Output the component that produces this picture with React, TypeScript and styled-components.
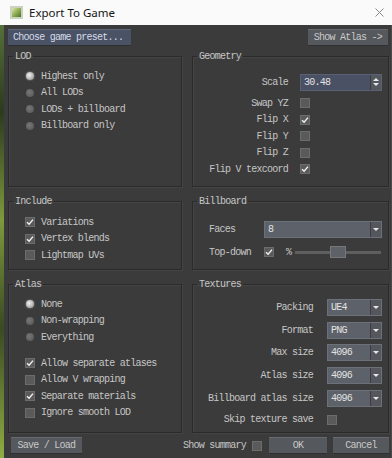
import styled, { createGlobalStyle } from "styled-components";

const Global = createGlobalStyle`
  html, body { margin: 0; padding: 0; background: #3b3b3b; }
  body { width: 392px; height: 458px; overflow: hidden; }
`;

const mono = `"Liberation Mono", "Courier New", monospace`;

const Screen = styled.div`
  width: 392px;
  height: 458px;
  display: flex;
  flex-direction: column;
  font-family: ${mono};
  font-size: 10px;
  letter-spacing: -0.75px;
  color: #c6c6c6;
`;

const TitleBar = styled.div`
  height: 25px;
  flex: none;
  display: flex;
  align-items: center;
  gap: 6px;
  padding: 0 8px 0 10px;
  background: #fafafa;
  font-family: "Noto Sans", "Open Sans", sans-serif;
  font-size: 11.5px;
  letter-spacing: 0;
  color: #151515;
`;

const TitleText = styled.span`
  flex: 1;
`;

const Frame = styled.div`
  flex: 1;
  display: flex;
  min-height: 0;
`;

const DesktopStrip = styled.div`
  width: 4px;
  flex: none;
  background: linear-gradient(180deg, #55703a 0%, #2c3a1e 20%, #7d9a3c 45%, #3a4a22 70%, #8fae44 100%);
`;

const Window = styled.div`
  flex: 1;
  display: flex;
  flex-direction: column;
  padding: 4px 3px 4px 4px;
  background: #3b3b3b;
  box-shadow: inset -1px 0 0 #4a4a4a;
`;

const TopBar = styled.div`
  height: 17px;
  display: flex;
  justify-content: space-between;
  padding-right: 1px;
`;

const Button = styled.div<{ $w: number; $tone?: "blue" | "grey" }>`
  width: ${(p) => p.$w}px;
  height: 17px;
  box-sizing: border-box;
  display: flex;
  align-items: center;
  justify-content: ${(p) => (p.$tone === "blue" ? "flex-start" : "center")};
  padding-left: ${(p) => (p.$tone === "blue" ? "5px" : "0")};
  background: ${(p) => (p.$tone === "blue" ? "#4a5266" : "#55585c")};
  border-top: 1px solid ${(p) => (p.$tone === "blue" ? "#5e667a" : "#66696d")};
  border-bottom: 1px solid #2e2f31;
  color: ${(p) => (p.$tone === "blue" ? "#d6dbe8" : "#c9c9c9")};
`;

const Grid = styled.div`
  margin-top: 5px;
  display: grid;
  grid-template-columns: 174px 197px;
  grid-template-rows: 136px 74px 154px;
  column-gap: 10px;
  row-gap: 9px;
`;

const Group = styled.fieldset`
  margin: 0;
  padding: 0;
  min-width: 0;
  border: 1px solid #2a2a2a;
  box-shadow: inset 1px 1px 0 #444, 1px 1px 0 #444;
`;

const Legend = styled.legend`
  margin-left: 4px;
  padding: 0 2px;
  line-height: 11px;
`;

const Stack = styled.div<{ $pt: number; $pl?: number }>`
  display: flex;
  flex-direction: column;
  padding-top: ${(p) => p.$pt}px;
  padding-left: ${(p) => p.$pl ?? 16}px;
`;

const Row = styled.div<{ $h?: number }>`
  height: ${(p) => p.$h ?? 16.5}px;
  display: flex;
  align-items: center;
  gap: 6px;
  white-space: nowrap;
`;

const Gap = styled.div<{ $h: number }>`
  height: ${(p) => p.$h}px;
`;

const Radio = styled.span<{ $on?: boolean }>`
  width: 8px;
  height: 8px;
  margin: 0 1px 0 1px;
  border-radius: 50%;
  flex: none;
  background: ${(p) =>
    p.$on
      ? "radial-gradient(circle at 40% 40%, #f0f0f0, #a8a8a8 70%)"
      : "radial-gradient(circle at 40% 40%, #777, #5c5c5c 75%)"};
  box-shadow: ${(p) => (p.$on ? "0 0 2px #999" : "none")};
`;

const Box = styled.span`
  width: 10px;
  height: 10px;
  box-sizing: border-box;
  flex: none;
  display: inline-flex;
  align-items: center;
  justify-content: center;
  background: #5a5a5a;
  border: 1px solid #6c6c6c;
`;

const Check = ({ on }: { on?: boolean }) => (
  <Box>
    {on && (
      <svg width="8" height="8" viewBox="0 0 8 8">
        <path d="M1 4.3 L3.1 6.3 L7 1.6" fill="none" stroke="#f2f2f2" strokeWidth="1.4" />
      </svg>
    )}
  </Box>
);

const FormGrid = styled.div<{ $cols: string; $gap: number; $pt: number; $pl?: number; $rows: string }>`
  display: grid;
  grid-template-columns: ${(p) => p.$cols};
  grid-template-rows: ${(p) => p.$rows};
  column-gap: ${(p) => p.$gap}px;
  align-items: center;
  padding-top: ${(p) => p.$pt}px;
  padding-left: ${(p) => p.$pl ?? 0}px;
  white-space: nowrap;
`;

const Label = styled.span<{ $right?: boolean }>`
  text-align: ${(p) => (p.$right ? "right" : "left")};
`;

const Field = styled.div<{ $w: number; $blue?: boolean }>`
  width: ${(p) => p.$w}px;
  height: 17px;
  box-sizing: border-box;
  display: flex;
  background: ${(p) => (p.$blue ? "#4a5164" : "#5d6169")};
  border: 1px solid ${(p) => (p.$blue ? "#5a6174" : "#6c7078")};
  color: #e2e2e2;
`;

const FieldText = styled.span`
  flex: 1;
  display: flex;
  align-items: center;
  padding-left: 3px;
`;

const ArrowCell = styled.span`
  width: 10px;
  flex: none;
  display: flex;
  flex-direction: column;
  align-items: center;
  justify-content: center;
  gap: 2px;
  background: #54575e;
  border-left: 1px solid #3b3d42;
`;

const Tri = styled.span<{ $up?: boolean }>`
  width: 0;
  height: 0;
  border-left: 3px solid transparent;
  border-right: 3px solid transparent;
  ${(p) => (p.$up ? "border-bottom: 3px solid #e8e8e8;" : "border-top: 3px solid #e8e8e8;")}
`;

const Combo = ({ value, w }: { value: string; w: number }) => (
  <Field $w={w}>
    <FieldText>{value}</FieldText>
    <ArrowCell>
      <Tri />
    </ArrowCell>
  </Field>
);

const SliderRow = styled.div`
  display: flex;
  align-items: center;
  gap: 0;
`;

const Pct = styled.span`
  margin: 0 4px 0 12px;
`;

const Track = styled.div`
  width: 86px;
  height: 3px;
  background: #5f5f5f;
  display: flex;
  align-items: center;
  padding-left: 35px;
  box-sizing: border-box;
`;

const Thumb = styled.span`
  width: 16px;
  height: 12px;
  box-sizing: border-box;
  background: #5e6166;
  border: 1px solid #74777c;
  flex: none;
`;

const Footer = styled.div`
  margin-top: 4px;
  height: 17px;
  display: flex;
  align-items: center;
  padding-left: 3px;
  padding-right: 0;
`;

const Spacer = styled.div`
  flex: 1;
`;

const SummaryLabel = styled.span`
  margin-right: 6px;
`;

const CloseX = () => (
  <svg width="9" height="9" viewBox="0 0 9 9">
    <path d="M0.5 0.5 L8.5 8.5 M8.5 0.5 L0.5 8.5" stroke="#8a8a8a" strokeWidth="1" />
  </svg>
);

const AppIcon = () => (
  <svg width="13" height="13" viewBox="0 0 13 13">
    <defs>
      <linearGradient id="ig" x1="0" y1="0" x2="1" y2="1">
        <stop offset="0" stopColor="#dfe6b0" />
        <stop offset="0.5" stopColor="#8fae52" />
        <stop offset="1" stopColor="#4e6e2c" />
      </linearGradient>
    </defs>
    <rect x="0" y="0" width="13" height="13" fill="#c9d3bd" />
    <rect x="2" y="2" width="9" height="9" fill="url(#ig)" />
  </svg>
);

export default function App() {
  return (
    <Screen>
      <Global />
      <TitleBar>
        <AppIcon />
        <TitleText>Export To Game</TitleText>
        <CloseX />
      </TitleBar>
      <Frame>
        <DesktopStrip />
        <Window>
          <TopBar>
            <Button $w={123} $tone="blue">
              Choose game preset...
            </Button>
            <Button $w={80}>Show Atlas -&gt;</Button>
          </TopBar>

          <Grid>
            <Group>
              <Legend>LOD</Legend>
              <Stack $pt={6} $pl={16}>
                <Row><Radio $on />Highest only</Row>
                <Row><Radio />All LODs</Row>
                <Row><Radio />LODs + billboard</Row>
                <Row><Radio />Billboard only</Row>
              </Stack>
            </Group>

            <Group>
              <Legend>Geometry</Legend>
              <FormGrid $cols="95px 1fr" $gap={12} $pt={7} $rows="26px repeat(5, 16.5px)">
                <Label $right>Scale</Label>
                <Field $w={82} $blue>
                  <FieldText>30.48</FieldText>
                  <ArrowCell>
                    <Tri $up />
                    <Tri />
                  </ArrowCell>
                </Field>
                <Label $right>Swap YZ</Label>
                <Check />
                <Label $right>Flip X</Label>
                <Check on />
                <Label $right>Flip Y</Label>
                <Check />
                <Label $right>Flip Z</Label>
                <Check />
                <Label $right>Flip V texcoord</Label>
                <Check on />
              </FormGrid>
            </Group>

            <Group>
              <Legend>Include</Legend>
              <Stack $pt={7}>
                <Row><Check on />Variations</Row>
                <Row><Check on />Vertex blends</Row>
                <Row><Check />Lightmap UVs</Row>
              </Stack>
            </Group>

            <Group>
              <Legend>Billboard</Legend>
              <FormGrid $cols="55px 1fr" $gap={0} $pt={14} $pl={16} $rows="17px 5.5px 17px">
                <Label>Faces</Label>
                <Combo value="8" w={118} />
                <span />
                <span />
                <Label>Top-down</Label>
                <SliderRow>
                  <Check on />
                  <Pct>%</Pct>
                  <Track>
                    <Thumb />
                  </Track>
                </SliderRow>
              </FormGrid>
            </Group>

            <Group>
              <Legend>Atlas</Legend>
              <Stack $pt={6}>
                <Row><Radio $on />None</Row>
                <Row><Radio />Non-wrapping</Row>
                <Row><Radio />Everything</Row>
                <Gap $h={9.5} />
                <Row><Check on />Allow separate atlases</Row>
                <Row><Check />Allow V wrapping</Row>
                <Row><Check on />Separate materials</Row>
                <Row><Check />Ignore smooth LOD</Row>
              </Stack>
            </Group>

            <Group>
              <Legend>Textures</Legend>
              <FormGrid $cols="120px 55px" $gap={14} $pt={6} $rows="repeat(5, 22.7px) 21px">
                <Label $right>Packing</Label>
                <Combo value="UE4" w={55} />
                <Label $right>Format</Label>
                <Combo value="PNG" w={55} />
                <Label $right>Max size</Label>
                <Combo value="4096" w={55} />
                <Label $right>Atlas size</Label>
                <Combo value="4096" w={55} />
                <Label $right>Billboard atlas size</Label>
                <Combo value="4096" w={55} />
                <Label $right>Skip texture save</Label>
                <Check />
              </FormGrid>
            </Group>
          </Grid>

          <Footer>
            <Button $w={71}>Save / Load</Button>
            <Spacer />
            <SummaryLabel>Show summary</SummaryLabel>
            <Check />
            <Button $w={58} style={{ marginLeft: 7 }}>OK</Button>
            <Button $w={56} style={{ marginLeft: 6 }}>Cancel</Button>
          </Footer>
        </Window>
      </Frame>
    </Screen>
  );
}
